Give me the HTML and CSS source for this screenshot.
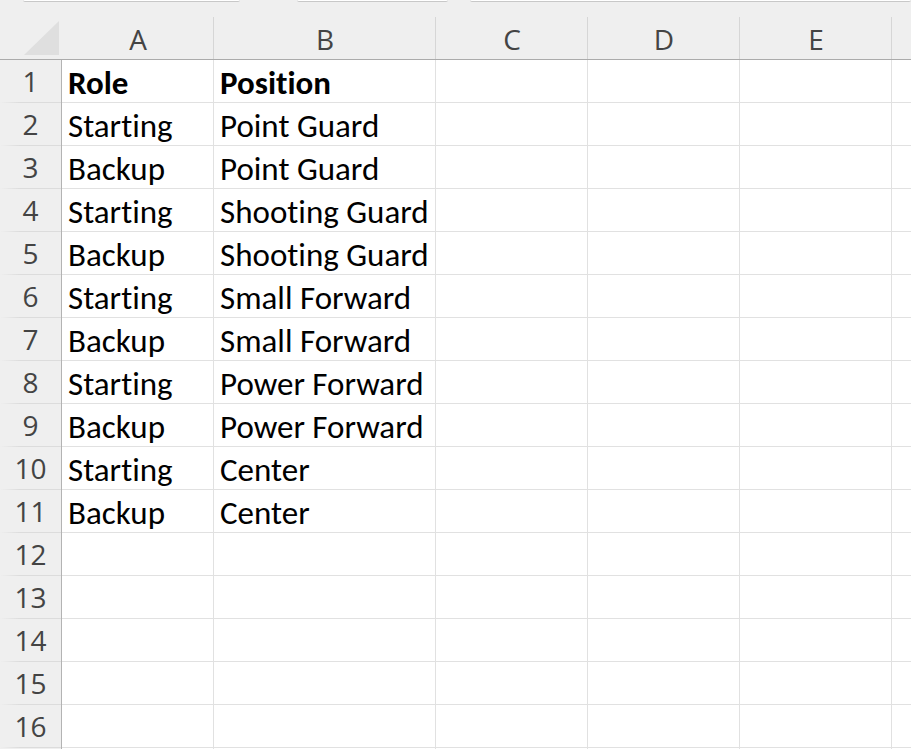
FILE: index.html
```html
<!DOCTYPE html>
<html lang="en">
<head>
  <meta charset="UTF-8">
  <title>Sheet1</title>
  <link rel="stylesheet" href="styles.css">
</head>
<body>

  <!-- ribbon edge above the grid -->
  <div class="tabs">
    <div class="tab tab-1"></div>
    <div class="tab tab-2"></div>
    <div class="tab tab-3"></div>
  </div>

  <div class="sheet">
    <!-- column headers -->
    <div class="corner">
      <svg width="35" height="34" viewBox="0 0 35 34"><polygon points="35,0 35,34 0,34" fill="#dfdfdf"/></svg>
    </div>
    <div class="col-head">A</div>
    <div class="col-head">B</div>
    <div class="col-head">C</div>
    <div class="col-head">D</div>
    <div class="col-head">E</div>
    <div class="col-head"></div>

    <div class="row-head">1</div>
    <div class="cell bold">Role</div>
    <div class="cell bold">Position</div>
    <div class="cell"></div><div class="cell"></div><div class="cell"></div><div class="cell"></div>

    <div class="row-head">2</div>
    <div class="cell">Starting</div>
    <div class="cell">Point Guard</div>
    <div class="cell"></div><div class="cell"></div><div class="cell"></div><div class="cell"></div>

    <div class="row-head">3</div>
    <div class="cell">Backup</div>
    <div class="cell">Point Guard</div>
    <div class="cell"></div><div class="cell"></div><div class="cell"></div><div class="cell"></div>

    <div class="row-head">4</div>
    <div class="cell">Starting</div>
    <div class="cell">Shooting Guard</div>
    <div class="cell"></div><div class="cell"></div><div class="cell"></div><div class="cell"></div>

    <div class="row-head">5</div>
    <div class="cell">Backup</div>
    <div class="cell">Shooting Guard</div>
    <div class="cell"></div><div class="cell"></div><div class="cell"></div><div class="cell"></div>

    <div class="row-head">6</div>
    <div class="cell">Starting</div>
    <div class="cell">Small Forward</div>
    <div class="cell"></div><div class="cell"></div><div class="cell"></div><div class="cell"></div>

    <div class="row-head">7</div>
    <div class="cell">Backup</div>
    <div class="cell">Small Forward</div>
    <div class="cell"></div><div class="cell"></div><div class="cell"></div><div class="cell"></div>

    <div class="row-head">8</div>
    <div class="cell">Starting</div>
    <div class="cell">Power Forward</div>
    <div class="cell"></div><div class="cell"></div><div class="cell"></div><div class="cell"></div>

    <div class="row-head">9</div>
    <div class="cell">Backup</div>
    <div class="cell">Power Forward</div>
    <div class="cell"></div><div class="cell"></div><div class="cell"></div><div class="cell"></div>

    <div class="row-head">10</div>
    <div class="cell">Starting</div>
    <div class="cell">Center</div>
    <div class="cell"></div><div class="cell"></div><div class="cell"></div><div class="cell"></div>

    <div class="row-head">11</div>
    <div class="cell">Backup</div>
    <div class="cell">Center</div>
    <div class="cell"></div><div class="cell"></div><div class="cell"></div><div class="cell"></div>

    <div class="row-head">12</div>
    <div class="cell"></div><div class="cell"></div><div class="cell"></div><div class="cell"></div><div class="cell"></div><div class="cell"></div>

    <div class="row-head">13</div>
    <div class="cell"></div><div class="cell"></div><div class="cell"></div><div class="cell"></div><div class="cell"></div><div class="cell"></div>

    <div class="row-head">14</div>
    <div class="cell"></div><div class="cell"></div><div class="cell"></div><div class="cell"></div><div class="cell"></div><div class="cell"></div>

    <div class="row-head">15</div>
    <div class="cell"></div><div class="cell"></div><div class="cell"></div><div class="cell"></div><div class="cell"></div><div class="cell"></div>

    <div class="row-head">16</div>
    <div class="cell"></div><div class="cell"></div><div class="cell"></div><div class="cell"></div><div class="cell"></div><div class="cell"></div>

    <div class="row-head"></div>
    <div class="cell"></div><div class="cell"></div><div class="cell"></div><div class="cell"></div><div class="cell"></div><div class="cell"></div>
  </div>

</body>
</html>
```

FILE: styles.css
```css
* { box-sizing: border-box; }
body { margin: 0; background: #fff; overflow: hidden; font-family: "Open Sans", sans-serif; }

.tabs { display: flex; height: 2px; background: #efefef; }
.tab { height: 2px; background: #fff; border-bottom: 1px solid #c8c8c8; border-radius: 0 0 3px 3px; }
.tab-1 { margin-left: 23px; width: 217px; }
.tab-2 { margin-left: 57px; width: 151px; }
.tab-3 { margin-left: 22px; flex: 1; }

.sheet { display: grid; grid-template-columns: 62px 152px 222px 152px 152px 152px 152px; grid-template-rows: 58px; grid-auto-rows: 43px; }

.corner { background: #efefef; border-bottom: 1px solid #ababab; display: flex; justify-content: flex-end; align-items: flex-end; padding: 0 3px 4px 0; }
.col-head { background: #efefef linear-gradient(#d6d6d6, #d6d6d6) right bottom / 1px 42px no-repeat; border-bottom: 1px solid #ababab; color: #444; font-size: 28px; line-height: 28px; text-align: center; padding-top: 23px; }

.row-head { background: #efefef linear-gradient(to right, #efefef, #dcdcdc 20px) left bottom / 100% 1px no-repeat; border-right: 1px solid #b3b3b3; color: #444; font-size: 28px; line-height: 28px; text-align: center; padding-top: 7px; }

.cell { border-right: 1px solid #e1e1e1; border-bottom: 1px solid #e1e1e1; font-family: Carlito, Lato, sans-serif; font-size: 33px; line-height: 33px; font-variant-ligatures: none; color: #000; padding: 7px 0 0 6px; white-space: nowrap; }
.bold { font-weight: bold; }
```
